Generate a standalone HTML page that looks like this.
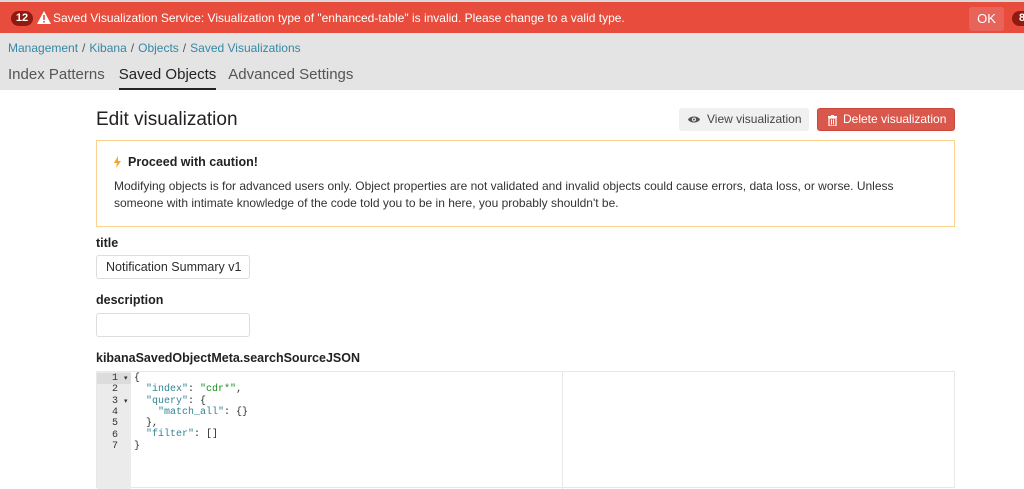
<!DOCTYPE html>
<html><head><meta charset="utf-8"><style>
*{box-sizing:border-box;margin:0;padding:0}
body{width:1024px;height:488px;overflow:hidden;background:#fff;font-family:"Liberation Sans",sans-serif;color:#2d2d2d;position:relative}
.top{position:absolute;left:0;top:0;width:1024px;height:2px;background:#d9d9d9}
.err{position:absolute;left:0;top:2px;width:1024px;height:31px;background:#e74c3c;color:#fff;font-size:12px}
.badge{position:absolute;top:9px;height:15px;background:#8f1a10;border-radius:8px;color:#fff;font-size:11px;font-weight:bold;line-height:15px;text-align:center}
.ok{position:absolute;left:969px;top:5px;width:35px;height:24px;background:#e8645a;border-radius:3px;text-align:center;line-height:24px;font-size:13px}
.gray{position:absolute;left:0;top:33px;width:1024px;height:57px;background:#e4e4e4}
.bc{position:absolute;left:8px;top:41px;font-size:12px;color:#3488a6}
.bc span{color:#555;margin:0 4px}
.tabs{position:absolute;left:8px;top:66px;font-size:15px;color:#555}
.tabs b{font-weight:normal;color:#222;border-bottom:2px solid #222;padding-bottom:5px;margin:0 12px 0 14px}
h1{position:absolute;left:96px;top:109px;font-size:19px;font-weight:normal;color:#222}
.btn{position:absolute;top:108px;height:23px;border-radius:3px;font-size:12px;line-height:23px}
.warn{position:absolute;left:96px;top:140px;width:859px;height:87px;border:1px solid #fbd38d;}
.warn .t{position:absolute;left:17px;top:14px;font-size:12.5px;font-weight:bold;color:#222}
.warn p{position:absolute;left:17px;top:37px;font-size:12px;line-height:17px;color:#333;width:800px}
.lbl{position:absolute;left:96px;font-size:12.5px;font-weight:bold;color:#222}
.inp{position:absolute;left:96px;width:154px;height:24px;border:1px solid #ddd;border-radius:3px;font-size:12.5px;line-height:22px;padding-left:9px}
.ed{position:absolute;left:96px;top:371px;width:859px;height:117px;border:1px solid #e8e8e8}
.gut{position:absolute;left:0;top:0;width:34px;height:117px;background:#ebebeb}
.code{position:absolute;left:0;top:1px;font-family:"Liberation Mono",monospace;font-size:10px;line-height:11.3px}
.ln{position:absolute;width:34px;height:11.3px;line-height:11.3px;font-family:"Liberation Mono",monospace;font-size:10px;color:#333}
.k{color:#318495}.s{color:#1a8f1a}
</style></head><body>
<div class="top"></div>
<div class="err">
<div class="badge" style="left:11px;width:22px">12</div>
<svg style="position:absolute;left:37px;top:9px" width="14" height="13" viewBox="0 0 14 13"><path d="M7 0L14 13H0Z" fill="#fff"/><rect x="6.2" y="4" width="1.6" height="5" fill="#e74c3c"/><rect x="6.2" y="10" width="1.6" height="1.6" fill="#e74c3c"/></svg>
<div style="position:absolute;left:53px;top:9px">Saved Visualization Service: Visualization type of "enhanced-table" is invalid. Please change to a valid type.</div>
<div class="ok">OK</div>
<div class="badge" style="left:1012px;width:20px">8</div>
</div>
<div class="gray"></div>
<div class="bc">Management<span>/</span>Kibana<span>/</span>Objects<span>/</span>Saved Visualizations</div>
<div class="tabs">Index Patterns<b>Saved Objects</b>Advanced Settings</div>
<h1>Edit visualization</h1>
<div class="btn" style="left:679px;width:130px;background:#f0f0f0;color:#444">
<svg style="position:absolute;left:9px;top:7px" width="12" height="9" viewBox="0 0 12 9"><path d="M0 4.5C2 0.5 10 0.5 12 4.5C10 8.5 2 8.5 0 4.5Z" fill="#555"/><circle cx="6" cy="4.5" r="2" fill="#f0f0f0"/><circle cx="6" cy="4.5" r="1" fill="#555"/></svg>
<span style="position:absolute;left:28px">View visualization</span></div>
<div class="btn" style="left:817px;width:138px;background:#d9574b;color:#fff;border:1px solid #c9473b">
<svg style="position:absolute;left:10px;top:6px" width="9" height="11" viewBox="0 0 9 11"><rect x="0" y="1" width="9" height="1.5" fill="#fff"/><rect x="3" y="0" width="3" height="1.5" fill="#fff"/><path d="M1 3h7v8H1z" fill="none" stroke="#fff" stroke-width="1.2"/><path d="M3.5 4.5v5M5.5 4.5v5" stroke="#fff"/></svg>
<span style="position:absolute;left:25px;top:-1px">Delete visualization</span></div>
<div class="warn">
<svg style="position:absolute;left:17px;top:15px" width="7" height="12" viewBox="0 0 7 12"><path d="M4 0L0 7H3L2 12L7 5H4Z" fill="#f5a623"/></svg>
<div class="t" style="left:31px">Proceed with caution!</div>
<p>Modifying objects is for advanced users only. Object properties are not validated and invalid objects could cause errors, data loss, or worse. Unless someone with intimate knowledge of the code told you to be in here, you probably shouldn't be.</p>
</div>
<div class="lbl" style="top:236px">title</div>
<div class="inp" style="top:255px">Notification Summary v1</div>
<div class="lbl" style="top:293px">description</div>
<div class="inp" style="top:313px"></div>
<div class="lbl" style="top:351px">kibanaSavedObjectMeta.searchSourceJSON</div>
<div class="ed">
<div class="gut"></div>
<div style="position:absolute;left:0;top:1px;width:34px;height:11.3px;background:#dcdcdc"></div>
<div style="position:absolute;left:465px;top:0;width:1px;height:117px;background:#e8e8e8"></div>
<div class="ln" style="top:1px;left:15px">1 <span style="font-size:7px">▾</span></div>
<div class="ln" style="top:12.3px;left:15px">2</div>
<div class="ln" style="top:23.6px;left:15px">3 <span style="font-size:7px">▾</span></div>
<div class="ln" style="top:34.9px;left:15px">4</div>
<div class="ln" style="top:46.2px;left:15px">5</div>
<div class="ln" style="top:57.5px;left:15px">6</div>
<div class="ln" style="top:68.8px;left:15px">7</div>
<pre class="code" style="left:37px">{
  <span class="k">"index"</span>: <span class="s">"cdr*"</span>,
  <span class="k">"query"</span>: {
    <span class="k">"match_all"</span>: {}
  },
  <span class="k">"filter"</span>: []
}</pre>
</div>
</body></html>
